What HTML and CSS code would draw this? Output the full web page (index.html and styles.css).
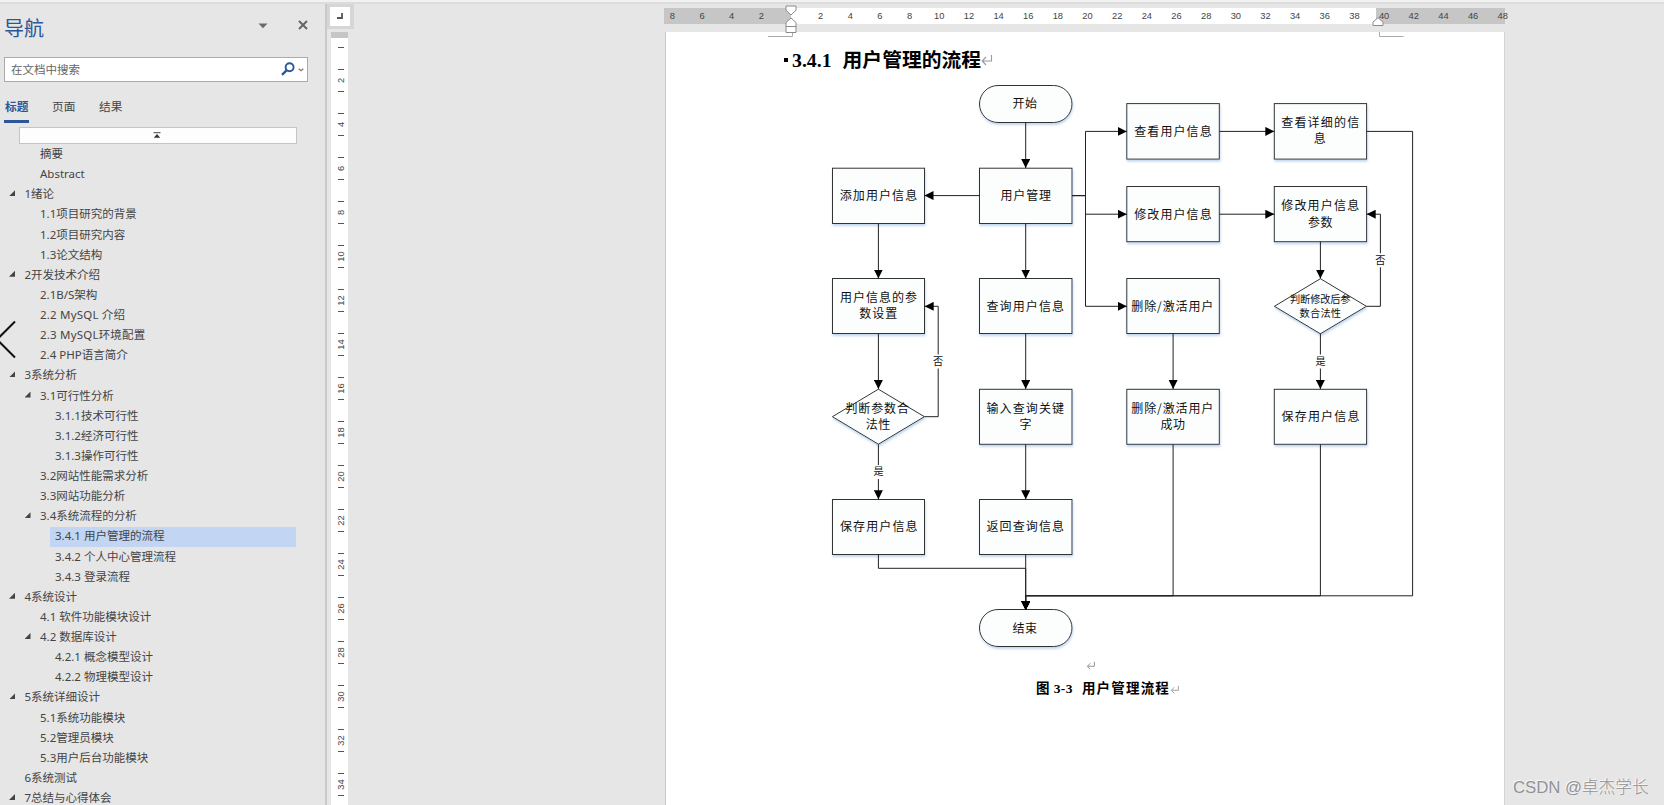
FILE: index.html
```html
<!DOCTYPE html>
<html lang="zh-CN">
<head>
<meta charset="utf-8">
<title>用户管理的流程</title>
<link rel="stylesheet" href="styles.css">
</head>
<body>
<div class="app">
  <div class="ribbon-edge"></div>
  <div class="workspace">
    <nav class="nav">
      <header class="nav-head">
        <h2 class="nav-title">导航</h2>
        <svg class="nav-menu" width="10" height="6" viewBox="0 0 10 6"><path d="M.5.5h9L5 5.3z" fill="#6a6a6a"/></svg>
        <svg class="nav-close" width="10" height="10" viewBox="0 0 10 10"><path d="M1 1l8 8M9 1L1 9" stroke="#666" stroke-width="2"/></svg>
      </header>
      <div class="search">
        <span class="search-hint">在文档中搜索</span>
        <svg width="14" height="14" viewBox="0 0 14 14" fill="none" stroke="#2b579a"><circle cx="8.6" cy="5.2" r="4" stroke-width="1.9"/><path d="M5.8 8.2L1 12.8" stroke-width="2.4"/></svg>
        <svg class="search-more" width="6" height="4" viewBox="0 0 6 4"><path d="M.7.7L3 2.8 5.3.7" fill="none" stroke="#777" stroke-width="1.2"/></svg>
      </div>
      <div class="tabs"><span class="tab active">标题</span><span class="tab">页面</span><span class="tab">结果</span></div>
      <div class="jump"><svg width="8" height="7" viewBox="0 0 8 7"><path d="M.5.7h7" stroke="#444"/><path d="M4 2L7.200 5.800H.8z" fill="#333"/></svg></div>
      <ul class="tree">
        <li class="l1">摘要</li>
        <li class="l1">Abstract</li>
        <li class="l0 open">1绪论</li>
        <li class="l1">1.1项目研究的背景</li>
        <li class="l1">1.2项目研究内容</li>
        <li class="l1">1.3论文结构</li>
        <li class="l0 open">2开发技术介绍</li>
        <li class="l1">2.1B/S架构</li>
        <li class="l1 wide">2.2 MySQL 介绍</li>
        <li class="l1 wide">2.3 MySQL环境配置</li>
        <li class="l1">2.4 PHP语言简介</li>
        <li class="l0 open">3系统分析</li>
        <li class="l1 open">3.1可行性分析</li>
        <li class="l2">3.1.1技术可行性</li>
        <li class="l2">3.1.2经济可行性</li>
        <li class="l2">3.1.3操作可行性</li>
        <li class="l1">3.2网站性能需求分析</li>
        <li class="l1">3.3网站功能分析</li>
        <li class="l1 open">3.4系统流程的分析</li>
        <li class="l2 current">3.4.1 用户管理的流程</li>
        <li class="l2">3.4.2 个人中心管理流程</li>
        <li class="l2">3.4.3 登录流程</li>
        <li class="l0 open">4系统设计</li>
        <li class="l1">4.1 软件功能模块设计</li>
        <li class="l1 open">4.2 数据库设计</li>
        <li class="l2">4.2.1 概念模型设计</li>
        <li class="l2">4.2.2 物理模型设计</li>
        <li class="l0 open">5系统详细设计</li>
        <li class="l1">5.1系统功能模块</li>
        <li class="l1">5.2管理员模块</li>
        <li class="l1">5.3用户后台功能模块</li>
        <li class="l0">6系统测试</li>
        <li class="l0 open">7总结与心得体会</li>
      </ul>
      <svg class="prev" width="16" height="40" viewBox="0 0 16 40"><path d="M15 1.5L-3 19.5 15 37.5" fill="none" stroke="#111" stroke-width="2"/></svg>
    </nav>

    <div class="vcol">
      <div class="tab-stop"><svg width="7" height="7" viewBox="0 0 7 7"><path d="M5 0v5H0" fill="none" stroke="#555" stroke-width="1.8"/></svg></div>
      <div class="vruler">
        <div class="vlead"></div>
        <div class="vc"><b>2</b></div><div class="vc"><b>4</b></div><div class="vc"><b>6</b></div><div class="vc"><b>8</b></div><div class="vc"><b>10</b></div><div class="vc"><b>12</b></div><div class="vc"><b>14</b></div><div class="vc"><b>16</b></div><div class="vc"><b>18</b></div><div class="vc"><b>20</b></div><div class="vc"><b>22</b></div><div class="vc"><b>24</b></div><div class="vc"><b>26</b></div><div class="vc"><b>28</b></div><div class="vc"><b>30</b></div><div class="vc"><b>32</b></div><div class="vc"><b>34</b></div>
      </div>
    </div>

    <main class="doc">
      <div class="hruler">
        <div class="hlabels"><b>8</b><b>6</b><b>4</b><b>2</b><b></b><b>2</b><b>4</b><b>6</b><b>8</b><b>10</b><b>12</b><b>14</b><b>16</b><b>18</b><b>20</b><b>22</b><b>24</b><b>26</b><b>28</b><b>30</b><b>32</b><b>34</b><b>36</b><b>38</b><b>40</b><b>42</b><b>44</b><b>46</b><b>48</b></div>
        <svg class="indent-left" width="12" height="29" viewBox="0 0 12 29" fill="#fff" stroke="#8a8a8a"><path d="M1 1h10v4.2L6 10 1 5.2zM1 17.5L6 13l5 4.5V27.500H1zM1 21.500h10"/></svg>
        <svg class="indent-right" width="12" height="10" viewBox="0 0 12 10" fill="#fff" stroke="#8a8a8a"><path d="M1 5L6 .7 11 5v3.500H1z"/></svg>
      </div>
      <article class="page">
        <svg class="crop" width="838" height="6" viewBox="666 32 838 6" fill="none" stroke="#aaa"><path d="M768 36.500h24.500V32M1403.500 36.500h-24V32"/></svg>
        <h1 class="heading"><i class="dot"></i><span class="num">3.4.1</span><span class="htext">用户管理的流程</span><svg class="ret" width="12" height="12" viewBox="0 0 12 12"><path d="M10.500 1v6H1.500M5 3L1.200 7 5 11" fill="none" stroke="#999" stroke-width="1.100"/></svg></h1>

        <svg class="flow" width="838" height="575" viewBox="666 80 838 575">
          <defs>
            <marker id="arrow" viewBox="0 0 9 9" refX="9" refY="4.5" markerWidth="9" markerHeight="9" markerUnits="userSpaceOnUse" orient="auto"><path d="M0 0l9 4.500-9 4.500z" fill="#000"/></marker>
            <filter id="shade" x="-10%" y="-10%" width="120%" height="130%"><feDropShadow dx="0.6" dy="2" stdDeviation="1.300" flood-color="#8fb4e0" flood-opacity=".55"/></filter>
          </defs>

          <g class="shapes" filter="url(#shade)">
            <rect x="979.500" y="85.500" width="92.500" height="37" rx="18.500"/>
            <rect x="832.500" y="168.200" width="92" height="55.300"/>
            <rect x="979.500" y="168.200" width="92.500" height="55.300"/>
            <rect x="1126.800" y="103.600" width="92.500" height="55.500"/>
            <rect x="1274.300" y="103.600" width="92.300" height="55.500"/>
            <rect x="1126.800" y="186.500" width="92.500" height="55.200"/>
            <rect x="1274.300" y="186.500" width="92.300" height="55.200"/>
            <rect x="832.500" y="278.500" width="92" height="55"/>
            <rect x="979.500" y="278.500" width="92.500" height="55"/>
            <rect x="1126.800" y="278.500" width="92.500" height="55"/>
            <path d="M1320.400 278.700l46 27.600-46 27.500-46-27.500z"/>
            <path d="M878.400 389.200l46 27.500-46 27.500-46-27.500z"/>
            <rect x="979.500" y="389.300" width="92.500" height="55"/>
            <rect x="1126.800" y="389.300" width="92.500" height="55"/>
            <rect x="1274.300" y="389.300" width="92.300" height="55"/>
            <rect x="832.500" y="499.500" width="92" height="55"/>
            <rect x="979.500" y="499.500" width="92.500" height="55"/>
            <rect x="979.500" y="609.500" width="92.500" height="37" rx="18.500"/>
          </g>

          <g class="links">
            <path d="M1025.700 122.500V168"/>
            <path d="M979.500 195.600H924.500"/>
            <path d="M1072 195.600H1085.500V131.400H1126.800"/>
            <path d="M1072 195.600H1085.500V214.200H1126.800"/>
            <path d="M1072 195.600H1085.500V306.300H1126.800"/>
            <path d="M1219.300 131.400H1274.300"/>
            <path d="M1219.300 214.200H1274.300"/>
            <path d="M878.400 223.500V278.500"/>
            <path d="M1025.700 223.500V278.500"/>
            <path d="M1320.400 241.700V278.500"/>
            <path d="M878.400 333.500V389"/>
            <path d="M1025.700 333.500V389"/>
            <path d="M1173.100 333.500V389"/>
            <path d="M1320.400 333.500V389"/>
            <path d="M878.400 444.300V499.300"/>
            <path d="M1025.700 444.300V499.300"/>
            <path d="M924.400 416.700H938.200V306.300H924.700"/>
            <path d="M1366.400 306.300H1380.400V214.200H1366.700"/>
            <path d="M1025.700 554.500V610"/>
            <path d="M878.400 554.500V568.300H1025.700V610"/>
            <path d="M1173.100 444.300V595.800H1025.700V610"/>
            <path d="M1320.400 444.300V595.800H1025.700V610"/>
            <path d="M1366.600 131.400H1412.600V595.800H1025.700V610"/>
          </g>

          <g fill="#fff">
            <rect x="930" y="354.500" width="17" height="14"/>
            <rect x="1372" y="253.300" width="17" height="14"/>
            <rect x="870" y="465" width="17" height="14"/>
            <rect x="1312" y="354.500" width="17" height="14"/>
          </g>

          <g class="labels">
            <text x="1012.500" y="108.100" textLength="24.500">开始</text>
            <text x="839.700" y="200.100" textLength="77.500">添加用户信息</text>
            <text x="1000.500" y="200.100" textLength="50.500">用户管理</text>
            <text x="1134.200" y="136.100" textLength="77.500">查看用户信息</text>
            <text x="1281.200" y="126.500" textLength="78">查看详细的信</text>
            <text x="1313.800" y="143.100">息</text>
            <text x="1134.200" y="218.500" textLength="77.500">修改用户信息</text>
            <text x="1281.200" y="210" textLength="78">修改用户信息</text>
            <text x="1308" y="226.500" textLength="24.500">参数</text>
            <text x="840" y="302" textLength="77">用户信息的参</text>
            <text x="859.300" y="318.400" textLength="38">数设置</text>
            <text x="986.500" y="310.600" textLength="77.500">查询用户信息</text>
            <text x="1131.300" y="310.600" textLength="82">删除/激活用户</text>
            <text x="845.500" y="412.500" textLength="63.500">判断参数合</text>
            <text x="865.800" y="428.600" textLength="24.500">法性</text>
            <text x="986.500" y="412.500" textLength="77.500">输入查询关键</text>
            <text x="1019.500" y="428.600">字</text>
            <text x="1131.300" y="412.500" textLength="82">删除/激活用户</text>
            <text x="1160.500" y="429.100" textLength="24.500">成功</text>
            <text x="1281.500" y="421" textLength="78">保存用户信息</text>
            <text x="840" y="531" textLength="77.500">保存用户信息</text>
            <text x="986.500" y="531" textLength="77.500">返回查询信息</text>
            <text x="1012.500" y="632.800" textLength="24.500">结束</text>
            <g class="small">
              <text x="1290" y="303" textLength="60.500">判断修改后参</text>
              <text x="1299.500" y="316.500" textLength="41.500">数合法性</text>
              <text x="933" y="365.200">否</text>
              <text x="1375.300" y="263.700">否</text>
              <text x="873.400" y="475.200">是</text>
              <text x="1315.400" y="365.200">是</text>
            </g>
          </g>
        </svg>

        <div class="blank-line"><svg width="10" height="9" viewBox="0 0 12 12"><path d="M10.500 1v6H1.500M5 3L1.200 7 5 11" fill="none" stroke="#888" stroke-width="1.200"/></svg></div>
        <p class="caption"><span class="fig">图 3-3</span><span class="cap-text">用户管理流程</span><svg width="10" height="9" viewBox="0 0 12 12"><path d="M10.500 1v6H1.500M5 3L1.200 7 5 11" fill="none" stroke="#999" stroke-width="1.200"/></svg></p>
      </article>
      <div class="watermark">CSDN @卓杰学长</div>
    </main>
  </div>
</div>
</body>
</html>
```
FILE: styles.css
```css
* { box-sizing: border-box; }
body { margin: 0; background: #e6e6e6; font-family: "Noto Sans", "Noto Sans CJK SC", sans-serif; }
svg { display: block; flex: none; }
.app { width: 1664px; height: 805px; overflow: hidden; display: flex; flex-direction: column; }
.ribbon-edge { height: 4px; flex: none; background: #f2f2f2; border-bottom: 2px solid #dcdcdc; }
.workspace { flex: 1; display: flex; min-height: 0; }

/* navigation pane */
.nav { position: relative; width: 327px; flex: none; border-right: 2px solid #c9c9c9; padding: 0 17px 0 4px; }
.nav-head { display: flex; height: 53px; padding-top: 9px; align-items: flex-start; }
.nav-title { margin: 0; font: 400 20px/30px "Noto Sans CJK SC", sans-serif; color: #2b579a; flex: 1; }
.nav-menu { margin: 10px 30px 0 0; }
.nav-close { margin: 7px 0 0 0; }
.search { display: flex; align-items: center; width: 304px; height: 25px; background: #fff; border: 1px solid #ababab; padding: 0 3px 2px 6px; }
.search-hint { flex: 1; font: 11.5px/20px "Noto Sans CJK SC", sans-serif; color: #666; }
.search-more { margin: 3px 0 0 3px; }
.tabs { display: flex; gap: 22px; height: 41px; margin-top: 4px; padding-top: 8px; }
.tab { width: 25px; height: 29px; padding-left: 1px; white-space: nowrap; font: 11.7px/24px "Noto Sans CJK SC", sans-serif; color: #444; }
.tab.active { color: #2b579a; font-weight: 700; border-bottom: 3px solid #2b579a; }
.jump { width: 278px; height: 17px; margin-left: 15px; padding-right: 3px; background: #fdfdfd; border: 1px solid #c4c4c4; display: flex; align-items: center; justify-content: center; }
.tree { list-style: none; margin: 0; padding: 0; }
.tree li { position: relative; height: 20.14px; font-size: 11.5px; line-height: 19.5px; color: #444; white-space: nowrap; }
.tree .l0 { padding-left: 20.500px; }
.tree .l1 { padding-left: 36px; }
.tree .l2 { margin-left: 46px; padding-left: 5px; width: 246px; }
.tree .wide { letter-spacing: .2px; }
.tree .current { background: linear-gradient(#e6e6e6 1px, #c2d5f2 1px); }
.tree .open::before { content: ""; position: absolute; top: 6px; left: 5px; width: 6px; height: 6px; background: #444; clip-path: polygon(100% 0, 100% 100%, 0 100%); }
.tree .l1.open::before { left: 20.500px; }
.prev { position: absolute; left: 0; top: 316px; }

/* rulers */
.vcol { width: 27px; flex: none; display: flex; flex-direction: column; }
.tab-stop { height: 25px; background: #fff; border: 3px solid #d6d6d6; border-right-width: 4px; display: flex; align-items: center; justify-content: center; }
.vruler { width: 17px; margin: 3px 0 0 4px; background: #fff; border-top: 6px solid #c6c6c6; flex: 1; overflow: hidden; }
.vlead { height: 20.500px; padding: 9px 0 0 7px; }
.vlead::before, .vc::before, .vc::after { content: ""; display: block; width: 6px; height: 1px; background: #555; }
.vc { height: 43.970px; padding: 10.500px 0 0 7px; }
.vc b { display: flex; align-items: center; justify-content: center; height: 21px; width: 21px; margin-left: -8px; transform: rotate(-90deg); }
.vc b, .hlabels b { font: 400 9.300px/12px "Liberation Sans", sans-serif; color: #444; }
.doc { position: relative; flex: 1; padding: 4px 0 0 310px; }
.hruler { position: relative; width: 841px; height: 15.500px; background: linear-gradient(90deg, #c6c6c6 127px, #fff 127px, #fff 712px, #c6c6c6 712px); }
.hlabels { display: flex; margin-left: -6.500px; width: 860px; }
.hlabels b { flex: 1; text-align: center; line-height: 17.500px; }
.indent-left { position: absolute; left: 121px; top: -3px; z-index: 1; }
.indent-right { position: absolute; left: 707.500px; top: 8.500px; }

/* page */
.page { width: 839.500px; height: 773px; margin: 8.500px 0 0 1px; background: #fff; border-left: 1px solid #c8c8c8; border-right: 1px solid #d4d4d4; }
.heading { display: flex; align-items: center; height: 42px; margin: 0; padding: 1px 0 0 118px; font: 700 19.800px/30px "Liberation Serif", "Noto Sans CJK SC", serif; }
.dot { width: 4px; height: 4px; background: #000; margin: 0 4px 0 0; }
.htext { margin-left: 11px; font-weight: 600; }
.flow { font-family: "Noto Sans CJK SC", sans-serif; }
.shapes { fill: #fcfefe; stroke: #333; stroke-width: 1; }
.links path { fill: none; stroke: #222; stroke-width: 1; marker-end: url(#arrow); }
.labels { font-size: 12px; fill: #111; }
.small { font-size: 10.200px; }
.blank-line { padding: 6px 0 0 420px; height: 24px; }
.caption { display: flex; align-items: center; margin: 0; padding-left: 370px; font: 700 13.500px/20px "Liberation Serif", "Noto Sans CJK SC", serif; }
.fig { letter-spacing: .4px; }
.cap-text { margin: 0 0 0 9px; letter-spacing: 1.200px; }
.watermark { position: absolute; left: 1159px; top: 771px; font: 300 16.700px/26px "Liberation Sans", "Noto Sans CJK SC", sans-serif; color: #929292; text-shadow: -1px -1px 0 #f7f7f7; white-space: nowrap; }
```
